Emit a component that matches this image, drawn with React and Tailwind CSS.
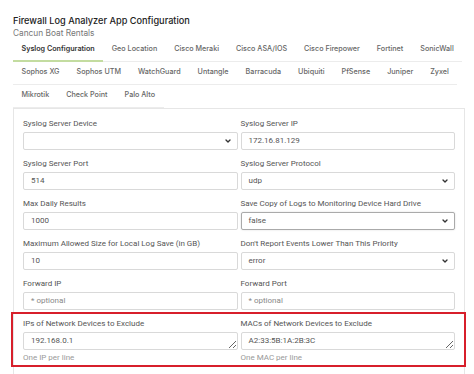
import { ChevronDown } from 'lucide-react'

const TAB_ROWS = [
  ['Syslog Configuration', 'Geo Location', 'Cisco Meraki', 'Cisco ASA/IOS', 'Cisco Firepower', 'Fortinet', 'SonicWall'],
  ['Sophos XG', 'Sophos UTM', 'WatchGuard', 'Untangle', 'Barracuda', 'Ubiquiti', 'PfSense', 'Juniper', 'Zyxel'],
  ['Mikrotik', 'Check Point', 'Palo Alto'],
]

const FIELDS = [
  { label: 'Syslog Server Device', type: 'select', value: '' },
  { label: 'Syslog Server IP', type: 'input', value: '172.16.81.129' },
  { label: 'Syslog Server Port', type: 'input', value: '514' },
  { label: 'Syslog Server Protocol', type: 'select', value: 'udp' },
  { label: 'Max Daily Results', type: 'input', value: '1000' },
  { label: 'Save Copy of Logs to Monitoring Device Hard Drive', type: 'select', value: 'false', focused: true },
  { label: 'Maximum Allowed Size for Local Log Save (in GB)', type: 'input', value: '10' },
  { label: "Don't Report Events Lower Than This Priority", type: 'select', value: 'error' },
  { label: 'Forward IP', type: 'input', placeholder: '* optional' },
  { label: 'Forward Port', type: 'input', placeholder: '* optional' },
]

function Tab({ label, active }) {
  return (
    <div className="flex flex-col">
      <span
        className={`px-[8.5px] pt-[4px] pb-[5px] text-[7.2px] leading-[12px] whitespace-nowrap ${
          active ? 'font-semibold text-[#333]' : 'font-medium text-[#666]'
        }`}
      >
        {label}
      </span>
      {active ? (
        <div className="h-[2px] bg-[#c3dca0]" />
      ) : (
        <div className="h-[2px] border-b border-[#ececec]" />
      )}
    </div>
  )
}

function Field({ field }) {
  const box = `h-[18px] rounded-[2px] border bg-white flex items-center pl-[7px] pr-[4px] text-[8px] ${
    field.focused ? 'border-[#aaa] shadow-[0_0_2px_rgba(0,0,0,0.15)]' : 'border-[#d9d9d9]'
  }`
  return (
    <div className="flex flex-col">
      <label className="text-[8px] leading-[12px] text-[#555] mb-[2px] whitespace-nowrap">{field.label}</label>
      <div className={box}>
        <span className={`flex-1 ${field.placeholder ? 'text-[#888]' : 'text-[#555]'}`}>
          {field.value || field.placeholder}
        </span>
        {field.type === 'select' && <ChevronDown size={8} strokeWidth={4} className="text-[#333] mr-[1px]" />}
      </div>
    </div>
  )
}

function TextArea({ label, value, help }) {
  return (
    <div className="flex flex-col">
      <label className="text-[8px] leading-[12px] text-[#555] mb-[2px] whitespace-nowrap">{label}</label>
      <textarea
        readOnly
        rows={1}
        value={value}
        className="h-[18px] rounded-[2px] border border-[#d9d9d9] bg-white pl-[7px] pt-[3px] text-[8px] leading-[10px] text-[#555] outline-none"
      />
      <span className="text-[8px] leading-[12px] mt-[2px] text-[#999]">{help}</span>
    </div>
  )
}

export default function App() {
  return (
    <div className="relative w-[474px] h-[374px] overflow-hidden bg-white font-['Roboto',sans-serif]">
      <div className="pl-[13px] pr-[9px] pt-[14px]">
        <h1 className="font-['Inter',sans-serif] text-[9.2px] leading-[14px] font-medium text-[#222]">
          Firewall Log Analyzer App Configuration
        </h1>
        <p className="font-['Inter',sans-serif] text-[8.3px] leading-[11px] text-[#777]">Cancun Boat Rentals</p>

        <div className="font-['Inter',sans-serif]">
          {TAB_ROWS.map((row, i) => (
            <div key={i} className="flex">
              {row.map(t => (
                <Tab key={t} label={t} active={t === 'Syslog Configuration'} />
              ))}
            </div>
          ))}
        </div>

        <div className="border border-[#e6e6e6] px-[9px] pt-[9px] pb-[20px]">
          <div className="grid grid-cols-2 gap-x-[3px] gap-y-[8px]">
            {FIELDS.map(f => (
              <Field key={f.label} field={f} />
            ))}
            <TextArea label="IPs of Network Devices to Exclude" value="192.168.0.1" help="One IP per line" />
            <TextArea label="MACs of Network Devices to Exclude" value="A2:33:5B:1A:2B:3C" help="One MAC per line" />
          </div>
        </div>
      </div>

      {/* highlight box */}
      <div className="absolute left-[11px] top-[312px] w-[455px] h-[55px] border-2 border-[#d71f2b]" />
    </div>
  )
}
